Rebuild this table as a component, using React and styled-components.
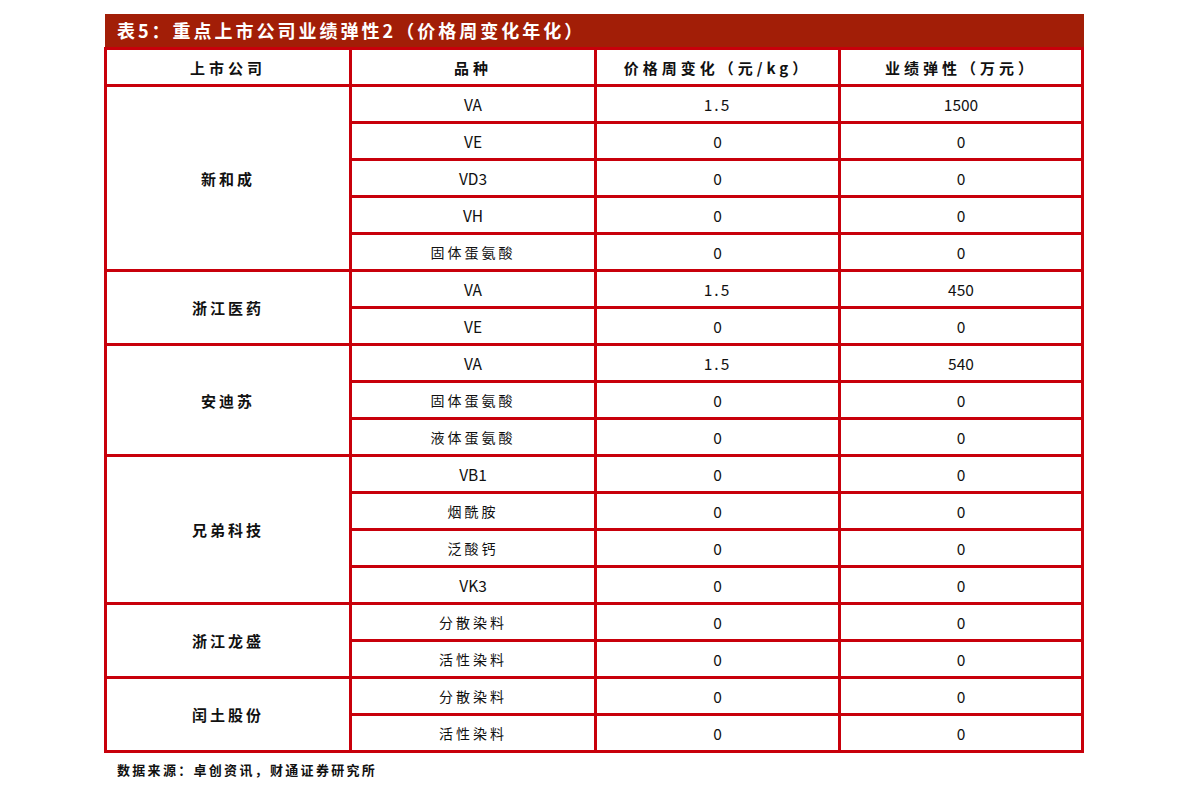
import React from 'react'
import styled, { createGlobalStyle } from 'styled-components'

const rows = [
  {
    company: '新和成',
    items: [
      ['VA', '1.5', '1500'],
      ['VE', '0', '0'],
      ['VD3', '0', '0'],
      ['VH', '0', '0'],
      ['固体蛋氨酸', '0', '0'],
    ],
  },
  {
    company: '浙江医药',
    items: [
      ['VA', '1.5', '450'],
      ['VE', '0', '0'],
    ],
  },
  {
    company: '安迪苏',
    items: [
      ['VA', '1.5', '540'],
      ['固体蛋氨酸', '0', '0'],
      ['液体蛋氨酸', '0', '0'],
    ],
  },
  {
    company: '兄弟科技',
    items: [
      ['VB1', '0', '0'],
      ['烟酰胺', '0', '0'],
      ['泛酸钙', '0', '0'],
      ['VK3', '0', '0'],
    ],
  },
  {
    company: '浙江龙盛',
    items: [
      ['分散染料', '0', '0'],
      ['活性染料', '0', '0'],
    ],
  },
  {
    company: '闰土股份',
    items: [
      ['分散染料', '0', '0'],
      ['活性染料', '0', '0'],
    ],
  },
]

const isCjk = s => /[^\x00-\x7f]/.test(s)

const GlobalStyle = createGlobalStyle`
  body {
    margin: 0;
    background: #fff;
    font-family: "Noto Sans CJK SC", "Noto Sans", sans-serif;
    color: #111;
  }
`

export default () => (
  <>
    <GlobalStyle />
    <Page>
      <TitleBar>表5：重点上市公司业绩弹性2（价格周变化年化）</TitleBar>
      <Table>
        <colgroup>
          <col style={{ width: 245 }} />
          <col style={{ width: 245 }} />
          <col style={{ width: 244 }} />
          <col style={{ width: 243 }} />
        </colgroup>
        <thead>
          <HeadRow>
            <Th>上市公司</Th>
            <Th>品种</Th>
            <Th>价格周变化（元/kg）</Th>
            <Th>业绩弹性（万元）</Th>
          </HeadRow>
        </thead>
        <tbody>
          {rows.map(group =>
            group.items.map((item, i) => (
              <Row key={group.company + i}>
                {i === 0 && (
                  <Company rowSpan={group.items.length}>{group.company}</Company>
                )}
                <Td $cjk={isCjk(item[0])}>{item[0]}</Td>
                <Td $spaced={item[1].includes('.')}>{item[1]}</Td>
                <Td>{item[2]}</Td>
              </Row>
            ))
          )}
        </tbody>
      </Table>
      <Source>数据来源：卓创资讯，财通证券研究所</Source>
    </Page>
  </>
)

const Page = styled.div`
  padding: 14px 0 0 104px;
  width: 980px;
`
const TitleBar = styled.div`
  height: 33px;
  margin-left: 1px;
  background: #a21e07;
  color: #fff;
  font-size: 18px;
  font-weight: 700;
  letter-spacing: 3px;
  line-height: 33px;
  padding-left: 12px;
  white-space: nowrap;
`
const Table = styled.table`
  width: 977px;
  border-collapse: collapse;
  table-layout: fixed;
  border: 3px solid #c8000b;
`
const HeadRow = styled.tr`
  height: 37px;
`
const Row = styled.tr`
  height: 37px;
`
const Th = styled.th`
  border: 3px solid #c8000b;
  padding: 0;
  font-size: 15px;
  font-weight: 700;
  letter-spacing: 4px;
  text-align: center;
  color: #111;
`
const Td = styled.td`
  border: 3px solid #c8000b;
  padding: 0;
  font-size: ${p => (p.$cjk ? '14px' : '15.5px')};
  text-align: center;
  letter-spacing: ${p => (p.$cjk ? '3px' : p.$spaced ? '2px' : '0')};
  color: #111;
`
const Company = styled(Td)`
  font-size: 15px;
  font-weight: 700;
  letter-spacing: 3px;
`
const Source = styled.div`
  margin-top: 7px;
  padding-left: 13px;
  font-size: 13px;
  font-weight: 700;
  letter-spacing: 2.3px;
  color: #111;
`
